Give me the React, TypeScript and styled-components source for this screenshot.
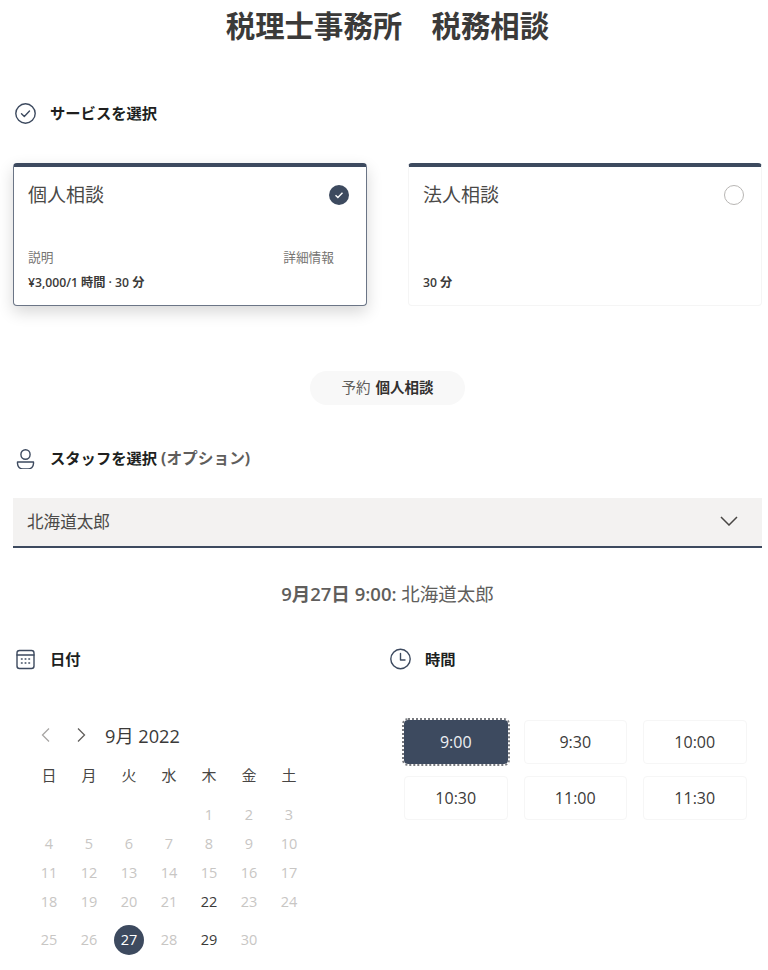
import React from "react";
import styled, { createGlobalStyle } from "styled-components";

const navy = "#3d4a5f";
const font = `"Open Sans", "Noto Sans CJK JP", sans-serif`;

const GlobalStyle = createGlobalStyle`
  html, body {
    margin: 0;
    padding: 0;
    background: #fff;
    overflow: hidden;
  }
  body {
    font-family: ${font};
    color: #323130;
  }
`;

const Page = styled.div`
  width: 768px;
  height: 970px;
  overflow: hidden;
  padding: 0 6px 0 13px;
  box-sizing: border-box;
`;

const Title = styled.h1`
  margin: 0;
  height: 52px;
  line-height: 52px;
  font-size: 29.4px;
  font-weight: 700;
  text-align: center;
  color: #3b3a39;
`;

const SectionHead = styled.div<{ $top: number }>`
  display: flex;
  align-items: flex-start;
  gap: 14px;
  margin-top: ${(p) => p.$top}px;
  height: 24px;
  padding-left: 2px;
`;

const HeadIcon = styled.svg`
  width: 21px;
  height: 22px;
  flex: none;
  fill: none;
  stroke: ${navy};
  stroke-width: 1.4;
  stroke-linecap: round;
  stroke-linejoin: round;
`;

const HeadText = styled.div`
  font-size: 15.3px;
  line-height: 20px;
  font-weight: 700;
  color: #201f1e;
  margin-top: 1px;
`;

const HeadNote = styled.span`
  color: #605e5c;
  font-size: 15.7px;
`;

const CardRow = styled.div`
  display: grid;
  grid-template-columns: 354px 354px;
  gap: 41px;
  margin-top: 37px;
`;

const Card = styled.div<{ $selected?: boolean }>`
  height: 143px;
  box-sizing: border-box;
  position: relative;
  padding: 14px 15px 0 14px;
  background: #fff;
  border-radius: 4px;
  border-top: 4px solid ${navy};
  border-left: 1px solid ${(p) => (p.$selected ? "#6b7586" : "#f5f5f5")};
  border-right: 1px solid ${(p) => (p.$selected ? "#6b7586" : "#f5f5f5")};
  border-bottom: 1px solid ${(p) => (p.$selected ? "#6b7586" : "#f5f5f5")};
  box-shadow: ${(p) => (p.$selected ? "0 6px 16px rgba(0, 0, 0, 0.16)" : "none")};
  display: flex;
  flex-direction: column;
`;

const CardTop = styled.div`
  display: flex;
  justify-content: space-between;
  align-items: center;
  height: 28px;
  padding-right: 2px;
`;

const CardName = styled.div`
  font-size: 19px;
  line-height: 28px;
  color: #4a4947;
`;

const RadioOn = styled.div`
  width: 20px;
  height: 20px;
  border-radius: 50%;
  background: ${navy};
  display: flex;
  align-items: center;
  justify-content: center;
`;

const RadioOff = styled.div`
  width: 20px;
  height: 20px;
  box-sizing: border-box;
  border-radius: 50%;
  border: 1.5px solid #b8b6b4;
`;

const InfoRow = styled.div`
  display: flex;
  justify-content: space-between;
  margin-top: 38px;
  height: 20px;
  font-size: 12.7px;
  line-height: 20px;
  color: #767472;
  padding-right: 17px;
`;

const Price = styled.div<{ $top: number }>`
  margin-top: ${(p) => p.$top}px;
  font-size: 12.2px;
  line-height: 20px;
  font-weight: 600;
  color: #3b3a39;
`;

const PriceUnit = styled.b`
  font-weight: 700;
`;

const PillRow = styled.div`
  display: flex;
  justify-content: center;
  margin-top: 65px;
`;

const Pill = styled.div`
  width: 155px;
  height: 34px;
  box-sizing: border-box;
  padding-bottom: 3px;
  border-radius: 17px;
  background: #f8f8f8;
  display: flex;
  align-items: center;
  justify-content: center;
  gap: 5px;
  font-size: 14.5px;
  color: #605e5c;
`;

const PillStrong = styled.b`
  font-weight: 700;
  font-size: 14.5px;
  color: #323130;
`;

const Select = styled.div`
  height: 50px;
  margin-top: 27px;
  box-sizing: border-box;
  background: #f3f2f1;
  border-bottom: 2px solid ${navy};
  display: flex;
  align-items: center;
  justify-content: space-between;
  padding: 0 24px 2px 14px;
  font-size: 16.6px;
  color: #4b4a48;
`;

const Summary = styled.div`
  margin-top: 32px;
  height: 28px;
  line-height: 28px;
  text-align: center;
  font-size: 18.5px;
  color: #605e5c;
`;

const SummaryStrong = styled.span`
  font-weight: 600;
`;

const Columns = styled.div`
  display: grid;
  grid-template-columns: 375px 1fr;
  margin-top: 40px;
`;

const Month = styled.div`
  display: flex;
  align-items: center;
  margin: 51px 0 0 27px;
  height: 24px;
  font-size: 18.2px;
  color: #3b3a39;
`;

const NavIcon = styled.svg<{ $dim?: boolean }>`
  width: 12px;
  height: 16px;
  fill: none;
  stroke: ${(p) => (p.$dim ? "#a8a6a4" : "#605e5c")};
  stroke-width: 1.3;
  margin-right: 23px;
  &:last-of-type {
    margin-right: 18px;
  }
`;

const CalendarGrid = styled.div`
  display: grid;
  grid-template-columns: repeat(7, 40px);
  margin: 13px 0 0 16px;
  width: 280px;
`;

const DayHead = styled.div`
  height: 40px;
  line-height: 30px;
  text-align: center;
  font-size: 15px;
  color: #484644;
`;

const DayCell = styled.div<{ $h: number }>`
  height: ${(p) => p.$h}px;
  display: flex;
  align-items: center;
  justify-content: center;
`;

const Day = styled.span<{ $open?: boolean; $picked?: boolean }>`
  width: 30px;
  height: 30px;
  border-radius: 50%;
  display: flex;
  align-items: center;
  justify-content: center;
  font-size: 14.5px;
  background: ${(p) => (p.$picked ? navy : "transparent")};
  color: ${(p) => (p.$picked ? "#fff" : p.$open ? "#3b3a39" : "#c8c6c4")};
`;

const TimeGrid = styled.div`
  display: grid;
  grid-template-columns: repeat(3, 103.5px);
  column-gap: 16px;
  row-gap: 12px;
  margin: 48px 0 0 16px;
`;

const TimeSlot = styled.div<{ $active?: boolean }>`
  height: 44px;
  box-sizing: border-box;
  border-radius: 4px;
  display: flex;
  align-items: center;
  justify-content: center;
  font-size: 16px;
  background: ${(p) => (p.$active ? navy : "#fff")};
  color: ${(p) => (p.$active ? "#eef0f3" : "#3b3a39")};
  border: ${(p) => (p.$active ? "none" : "1px solid #f6f6f6")};
  outline: ${(p) => (p.$active ? "2px dotted #77797e" : "none")};
  outline-offset: 0;
`;

const weeks: (number | null)[][] = [
  [null, null, null, null, 1, 2, 3],
  [4, 5, 6, 7, 8, 9, 10],
  [11, 12, 13, 14, 15, 16, 17],
  [18, 19, 20, 21, 22, 23, 24],
  [25, 26, 27, 28, 29, 30, null],
];
const rowHeights = [29, 29, 29, 29, 47];
const times = ["9:00", "9:30", "10:00", "10:30", "11:00", "11:30"];

export default function App() {
  return (
    <Page>
      <GlobalStyle />
      <Title>税理士事務所　税務相談</Title>

      <SectionHead $top={50}>
        <HeadIcon viewBox="0 0 21 22">
          <circle cx="10.5" cy="11.5" r="9.7" />
          <path d="M6.5 11.8l2.8 2.7 5.2-5.4" />
        </HeadIcon>
        <HeadText>サービスを選択</HeadText>
      </SectionHead>

      <CardRow>
        <Card $selected>
          <CardTop>
            <CardName>個人相談</CardName>
            <RadioOn>
              <svg width="10" height="10" viewBox="0 0 10 10" fill="none" stroke="#fff" strokeWidth="1.4">
                <path d="M1.5 5.3l2.4 2.3 4.6-4.8" />
              </svg>
            </RadioOn>
          </CardTop>
          <InfoRow>
            <span>説明</span>
            <span>詳細情報</span>
          </InfoRow>
          <Price $top={6}>
            ¥3,000/1 時間 · 30 <PriceUnit>分</PriceUnit>
          </Price>
        </Card>
        <Card>
          <CardTop>
            <CardName>法人相談</CardName>
            <RadioOff />
          </CardTop>
          <Price $top={64}>
            30 <PriceUnit>分</PriceUnit>
          </Price>
        </Card>
      </CardRow>

      <PillRow>
        <Pill>
          予約 <PillStrong>個人相談</PillStrong>
        </Pill>
      </PillRow>

      <SectionHead $top={42}>
        <HeadIcon viewBox="0 0 21 22">
          <ellipse cx="10.5" cy="7.5" rx="4.6" ry="4.8" />
          <path d="M2.5 15h16v1.6a5.4 5.4 0 0 1-5.4 5.4h-5.2a5.4 5.4 0 0 1-5.4-5.4z" />
        </HeadIcon>
        <HeadText>
          スタッフを選択 <HeadNote>(オプション)</HeadNote>
        </HeadText>
      </SectionHead>

      <Select>
        <span>北海道太郎</span>
        <svg width="18" height="10" viewBox="0 0 18 10" fill="none" stroke="#484644" strokeWidth="1.5">
          <path d="M1 1l8 8 8-8" />
        </svg>
      </Select>

      <Summary>
        <SummaryStrong>9月27日 9:00:</SummaryStrong> 北海道太郎
      </Summary>

      <Columns>
        <div>
          <SectionHead $top={0}>
            <HeadIcon viewBox="0 0 21 22">
              <rect x="2" y="2.5" width="17" height="18" rx="2.5" />
              <path d="M2 7h17" />
              <path d="M6.5 11h.6M10.2 11h.6M13.9 11h.6M6.5 15h.6M10.2 15h.6M13.9 15h.6" strokeWidth="1.6" />
            </HeadIcon>
            <HeadText>日付</HeadText>
          </SectionHead>
          <Month>
            <NavIcon $dim viewBox="0 0 12 16">
              <path d="M9 1.5L2.5 8 9 14.5" />
            </NavIcon>
            <NavIcon viewBox="0 0 12 16">
              <path d="M3 1.5L9.5 8 3 14.5" />
            </NavIcon>
            9月 2022
          </Month>
          <CalendarGrid>
            {["日", "月", "火", "水", "木", "金", "土"].map((d) => (
              <DayHead key={d}>{d}</DayHead>
            ))}
            {weeks.map((week, w) =>
              week.map((n, i) => (
                <DayCell key={`${w}-${i}`} $h={rowHeights[w]}>
                  {n && (
                    <Day $open={n === 22 || n === 29} $picked={n === 27}>
                      {n}
                    </Day>
                  )}
                </DayCell>
              ))
            )}
          </CalendarGrid>
        </div>
        <div>
          <SectionHead $top={0}>
            <HeadIcon viewBox="0 0 21 22">
              <circle cx="10.5" cy="11" r="9.7" />
              <path d="M10.5 5.5V12h4.5" />
            </HeadIcon>
            <HeadText>時間</HeadText>
          </SectionHead>
          <TimeGrid>
            {times.map((t, i) => (
              <TimeSlot key={t} $active={i === 0}>
                {t}
              </TimeSlot>
            ))}
          </TimeGrid>
        </div>
      </Columns>
    </Page>
  );
}
